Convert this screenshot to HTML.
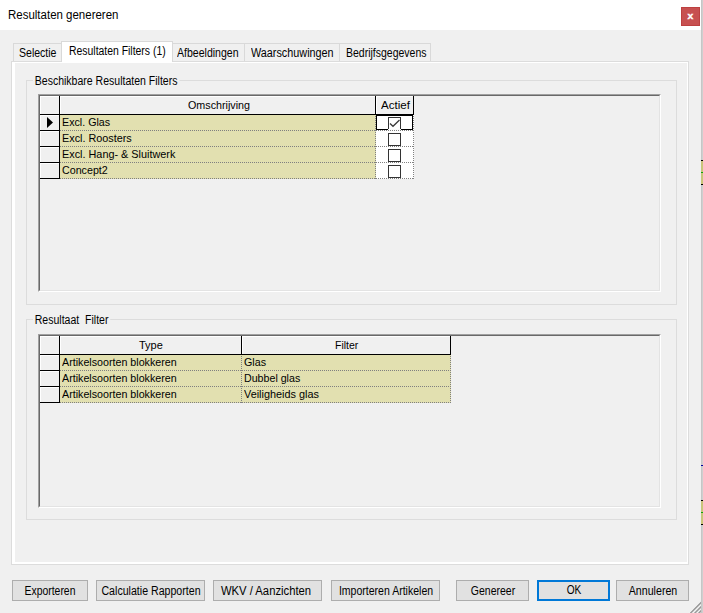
<!DOCTYPE html>
<html lang="nl">
<head>
<meta charset="utf-8">
<title>Resultaten genereren</title>
<style>
*{box-sizing:border-box;margin:0;padding:0}
html,body{width:703px;height:613px;overflow:hidden;background:#f0f0f0}
body{position:relative;font-family:"Liberation Sans",sans-serif;font-size:11px;color:#000;line-height:13px}
.abs{position:absolute}
.t{position:absolute;white-space:pre;display:inline-block;transform-origin:0 0}
#titlebar{left:0;top:0;width:701px;height:30px;background:#fff}
#title{font-size:12px;line-height:14px}
#close{left:681px;top:7px;width:19px;height:19px;background:#c75050;border:1px solid #bd4040}
#close span{position:absolute;left:-1px;top:3px;width:19px;text-align:center;color:#fff;font-weight:bold;font-size:9px;line-height:11px;transform:scaleX(1.15);-webkit-text-stroke:0.35px #fff}
#rstrip{left:701px;top:0;width:2px;height:613px;background:linear-gradient(to right,#c6c6c6 50%,#cfcfcf 50%)}
.patch{left:701px;width:2px;height:25px;background:#c9c57a;border-top:1px solid #000;border-bottom:1px solid #000}
.patch i{position:absolute;left:0;top:11px;width:2px;height:1px;background:#10a010}
/* tabs */
.tab{border:1px solid #d9d9d9;border-bottom:none;background:#f0f0f0;top:43px;height:18px}
.tab.sel{top:41px;height:21px;background:#fff}
#pane{left:11px;top:61px;width:678px;height:504px;border:1px solid #dcdcdc;background:#fff}
#page{left:15px;top:63px;width:672px;height:499px;background:#f0f0f0}
/* group */
.grp{border:1px solid #dcdcdc}
.glbl{background:#f0f0f0;padding:0 2px}
/* grid */
.grid{border-style:solid;border-width:1px;border-color:#a0a0a0 #fff #fff #a0a0a0;background:#f0f0f0}
.grid .in{position:absolute;left:0;top:0;right:0;bottom:0;border-style:solid;border-width:1px;border-color:#696969 #e3e3e3 #e3e3e3 #696969}
.hc{background:#f0f0f0;border-left:1px solid #fff;border-top:1px solid #fff}
.bl{background:#000}
.cell{background:#e2e0b0}
.wcell{background:#fff}
.hd{background-image:linear-gradient(to right,#808080 50%,rgba(0,0,0,0) 50%);background-size:2px 1px;height:1px}
.vd{background-image:linear-gradient(to bottom,rgba(0,0,0,0) 50%,#808080 50%);background-size:1px 2px;width:1px}
.chk{width:13px;height:13px;border:1px solid #333;background:#fff}
/* buttons */
.btn{top:580px;height:21px;border:1px solid #adadad;background:#e1e1e1;text-align:center;line-height:19px;white-space:pre}
.bt{position:absolute;left:50%;top:1px;white-space:pre;transform-origin:50% 50%;font-size:12px}
#tb1,#tb2,#tb3,#tb4,#tb5,#g1,#g2{font-size:12px}
.btn.def{border:2px solid #0078d7;line-height:17px}
.btn.def .bt{top:0}
</style>
</head>
<body>
<div class="abs" id="titlebar"></div>
<span class="t" id="title" style="left:8.4px;top:8px;transform:scaleX(0.957)">Resultaten genereren</span>
<div class="abs" id="close"><span>x</span></div>
<div class="abs" id="rstrip"></div>
<div class="abs patch" style="top:160px"><i></i></div>
<div class="abs patch" style="top:500px"><i></i></div>
<div class="abs" style="left:701px;top:465px;width:2px;height:1px;background:#0000a0"></div>

<!-- tab pane -->
<div class="abs" id="pane"></div>
<div class="abs" id="page"></div>

<!-- tabs -->
<div class="abs tab" style="left:13px;width:49px"></div>
<div class="abs tab" style="left:172px;width:73px"></div>
<div class="abs tab" style="left:244px;width:96px"></div>
<div class="abs tab" style="left:339px;width:92px"></div>
<div class="abs tab sel" style="left:61px;width:112px"></div>
<span class="t" id="tb1" style="left:18.9px;top:47px;transform:scaleX(0.878)">Selectie</span>
<span class="t" id="tb2" style="left:68.5px;top:45px;transform:scaleX(0.868)">Resultaten Filters (1)</span>
<span class="t" id="tb3" style="left:177px;top:47px;transform:scaleX(0.879)">Afbeeldingen</span>
<span class="t" id="tb4" style="left:251px;top:47px;transform:scaleX(0.902)">Waarschuwingen</span>
<span class="t" id="tb5" style="left:346.3px;top:47px;transform:scaleX(0.874)">Bedrijfsgegevens</span>

<!-- group 1 -->
<div class="abs grp" style="left:26px;top:80px;width:651px;height:225px"></div>
<span class="t glbl" id="g1" style="left:33px;top:75px;transform:scaleX(0.877)">Beschikbare Resultaten Filters</span>
<!-- group 2 -->
<div class="abs grp" style="left:26px;top:319px;width:651px;height:201px"></div>
<span class="t glbl" id="g2" style="left:33px;top:314px;transform:scaleX(0.877)">Resultaat  Filter</span>

<!-- grid 1 -->
<div class="abs grid" style="left:38px;top:94px;width:623px;height:198px"><div class="in"></div></div>
<!-- grid 2 -->
<div class="abs grid" style="left:38px;top:334px;width:623px;height:174px"><div class="in"></div></div>

<!-- gridcontent -->
<div class="abs hc" style="left:40px;top:96px;width:19px;height:18px"></div>
<div class="abs bl" style="left:59px;top:96px;width:1px;height:19px"></div>
<div class="abs hc" style="left:60px;top:96px;width:315px;height:18px"></div>
<div class="abs bl" style="left:375px;top:96px;width:1px;height:19px"></div>
<div class="abs hc" style="left:376px;top:96px;width:37px;height:18px"></div>
<div class="abs bl" style="left:413px;top:96px;width:1px;height:19px"></div>
<div class="abs bl" style="left:40px;top:114px;width:374px;height:1px"></div>
<div class="abs hc" style="left:40px;top:115px;width:19px;height:15px"></div>
<div class="abs bl" style="left:59px;top:115px;width:1px;height:16px"></div>
<div class="abs bl" style="left:40px;top:130px;width:20px;height:1px"></div>
<div class="abs cell" style="left:60px;top:115px;width:315px;height:15px"></div>
<div class="abs cell" style="left:60px;top:130px;width:316px;height:1px"></div>
<div class="abs cell" style="left:375px;top:115px;width:1px;height:15px"></div>
<div class="abs wcell" style="left:376px;top:115px;width:37px;height:15px"></div>
<div class="abs wcell" style="left:376px;top:130px;width:38px;height:1px"></div>
<div class="abs wcell" style="left:413px;top:115px;width:1px;height:15px"></div>
<div class="abs hd" style="left:60px;top:130px;width:354px"></div>
<div class="abs hc" style="left:40px;top:131px;width:19px;height:15px"></div>
<div class="abs bl" style="left:59px;top:131px;width:1px;height:16px"></div>
<div class="abs bl" style="left:40px;top:146px;width:20px;height:1px"></div>
<div class="abs cell" style="left:60px;top:131px;width:315px;height:15px"></div>
<div class="abs cell" style="left:60px;top:146px;width:316px;height:1px"></div>
<div class="abs cell" style="left:375px;top:131px;width:1px;height:15px"></div>
<div class="abs wcell" style="left:376px;top:131px;width:37px;height:15px"></div>
<div class="abs wcell" style="left:376px;top:146px;width:38px;height:1px"></div>
<div class="abs wcell" style="left:413px;top:131px;width:1px;height:15px"></div>
<div class="abs hd" style="left:60px;top:146px;width:354px"></div>
<div class="abs hc" style="left:40px;top:147px;width:19px;height:15px"></div>
<div class="abs bl" style="left:59px;top:147px;width:1px;height:16px"></div>
<div class="abs bl" style="left:40px;top:162px;width:20px;height:1px"></div>
<div class="abs cell" style="left:60px;top:147px;width:315px;height:15px"></div>
<div class="abs cell" style="left:60px;top:162px;width:316px;height:1px"></div>
<div class="abs cell" style="left:375px;top:147px;width:1px;height:15px"></div>
<div class="abs wcell" style="left:376px;top:147px;width:37px;height:15px"></div>
<div class="abs wcell" style="left:376px;top:162px;width:38px;height:1px"></div>
<div class="abs wcell" style="left:413px;top:147px;width:1px;height:15px"></div>
<div class="abs hd" style="left:60px;top:162px;width:354px"></div>
<div class="abs hc" style="left:40px;top:163px;width:19px;height:15px"></div>
<div class="abs bl" style="left:59px;top:163px;width:1px;height:16px"></div>
<div class="abs bl" style="left:40px;top:178px;width:20px;height:1px"></div>
<div class="abs cell" style="left:60px;top:163px;width:315px;height:15px"></div>
<div class="abs cell" style="left:60px;top:178px;width:316px;height:1px"></div>
<div class="abs cell" style="left:375px;top:163px;width:1px;height:15px"></div>
<div class="abs wcell" style="left:376px;top:163px;width:37px;height:15px"></div>
<div class="abs wcell" style="left:376px;top:178px;width:38px;height:1px"></div>
<div class="abs wcell" style="left:413px;top:163px;width:1px;height:15px"></div>
<div class="abs hd" style="left:60px;top:178px;width:354px"></div>
<div class="abs vd" style="left:375px;top:115px;height:64px"></div>
<div class="abs vd" style="left:413px;top:115px;height:64px"></div>
<span class="t" id="h1a" style="left:187.5px;top:99px;transform:scaleX(0.976)">Omschrijving</span>
<span class="t" id="h1b" style="left:381px;top:99px;transform:scaleX(1.05)">Actief</span>
<span class="t" id="r1_0" style="left:62px;top:116px;transform:scaleX(0.972)">Excl. Glas</span>
<div class="abs chk" style="left:388px;top:117px;height:12px;border-bottom:none"></div>
<span class="t" id="r1_1" style="left:62px;top:132px;transform:scaleX(0.984)">Excl. Roosters</span>
<div class="abs chk" style="left:388px;top:133px"></div>
<span class="t" id="r1_2" style="left:62px;top:148px;transform:scaleX(0.986)">Excl. Hang- &amp; Sluitwerk</span>
<div class="abs chk" style="left:388px;top:149px"></div>
<span class="t" id="r1_3" style="left:62px;top:164px;transform:scaleX(0.972)">Concept2</span>
<div class="abs chk" style="left:388px;top:165px"></div>
<div class="abs" style="left:376px;top:114px;width:37px;height:16px;border:1px solid #000;border-top-width:2px"></div>
<div class="abs" style="left:388px;top:129px;width:13px;height:1px;background:#fbfbfb"></div>
<svg class="abs" style="left:388px;top:117px" width="13" height="13" viewBox="0 0 13 13"><path d="M2 6.5 L5 9.3 L11.5 3" fill="none" stroke="#3a3a3a" stroke-width="1.3"/></svg>
<svg class="abs" style="left:46px;top:116px" width="9" height="13" viewBox="0 0 9 13"><path d="M1 1 L1 12 L7 6.5 Z" fill="#000"/></svg>
<div class="abs hc" style="left:40px;top:336px;width:19px;height:18px"></div>
<div class="abs bl" style="left:59px;top:336px;width:1px;height:19px"></div>
<div class="abs hc" style="left:60px;top:336px;width:181px;height:18px"></div>
<div class="abs bl" style="left:241px;top:336px;width:1px;height:19px"></div>
<div class="abs hc" style="left:242px;top:336px;width:208px;height:18px"></div>
<div class="abs bl" style="left:450px;top:336px;width:1px;height:19px"></div>
<div class="abs bl" style="left:40px;top:354px;width:411px;height:1px"></div>
<div class="abs hc" style="left:40px;top:355px;width:19px;height:15px"></div>
<div class="abs bl" style="left:59px;top:355px;width:1px;height:16px"></div>
<div class="abs bl" style="left:40px;top:370px;width:20px;height:1px"></div>
<div class="abs cell" style="left:60px;top:355px;width:181px;height:15px"></div>
<div class="abs cell" style="left:60px;top:370px;width:182px;height:1px"></div>
<div class="abs cell" style="left:241px;top:355px;width:1px;height:15px"></div>
<div class="abs cell" style="left:242px;top:355px;width:208px;height:15px"></div>
<div class="abs cell" style="left:242px;top:370px;width:209px;height:1px"></div>
<div class="abs cell" style="left:450px;top:355px;width:1px;height:15px"></div>
<div class="abs hd" style="left:60px;top:370px;width:391px"></div>
<div class="abs hc" style="left:40px;top:371px;width:19px;height:15px"></div>
<div class="abs bl" style="left:59px;top:371px;width:1px;height:16px"></div>
<div class="abs bl" style="left:40px;top:386px;width:20px;height:1px"></div>
<div class="abs cell" style="left:60px;top:371px;width:181px;height:15px"></div>
<div class="abs cell" style="left:60px;top:386px;width:182px;height:1px"></div>
<div class="abs cell" style="left:241px;top:371px;width:1px;height:15px"></div>
<div class="abs cell" style="left:242px;top:371px;width:208px;height:15px"></div>
<div class="abs cell" style="left:242px;top:386px;width:209px;height:1px"></div>
<div class="abs cell" style="left:450px;top:371px;width:1px;height:15px"></div>
<div class="abs hd" style="left:60px;top:386px;width:391px"></div>
<div class="abs hc" style="left:40px;top:387px;width:19px;height:15px"></div>
<div class="abs bl" style="left:59px;top:387px;width:1px;height:16px"></div>
<div class="abs bl" style="left:40px;top:402px;width:20px;height:1px"></div>
<div class="abs cell" style="left:60px;top:387px;width:181px;height:15px"></div>
<div class="abs cell" style="left:60px;top:402px;width:182px;height:1px"></div>
<div class="abs cell" style="left:241px;top:387px;width:1px;height:15px"></div>
<div class="abs cell" style="left:242px;top:387px;width:208px;height:15px"></div>
<div class="abs cell" style="left:242px;top:402px;width:209px;height:1px"></div>
<div class="abs cell" style="left:450px;top:387px;width:1px;height:15px"></div>
<div class="abs hd" style="left:60px;top:402px;width:391px"></div>
<div class="abs vd" style="left:241px;top:355px;height:48px"></div>
<div class="abs vd" style="left:450px;top:355px;height:48px"></div>
<span class="t" id="h2a" style="left:139px;top:339px">Type</span>
<span class="t" id="h2b" style="left:334.6px;top:339px;transform:scaleX(0.952)">Filter</span>
<span class="t" id="r2a_0" style="left:62px;top:356px;transform:scaleX(0.972)">Artikelsoorten blokkeren</span>
<span class="t" id="r2b_0" style="left:244px;top:356px;transform:scaleX(0.975)">Glas</span>
<span class="t" id="r2a_1" style="left:62px;top:372px;transform:scaleX(0.972)">Artikelsoorten blokkeren</span>
<span class="t" id="r2b_1" style="left:244px;top:372px;transform:scaleX(0.968)">Dubbel glas</span>
<span class="t" id="r2a_2" style="left:62px;top:388px;transform:scaleX(0.972)">Artikelsoorten blokkeren</span>
<span class="t" id="r2b_2" style="left:244px;top:388px;transform:scaleX(0.988)">Veiligheids glas</span>
<!-- /gridcontent -->
<!-- buttons -->
<div class="abs btn" style="left:12px;width:76px"><span class="bt" id="b1" style="transform:translateX(-50%) scaleX(0.867)">Exporteren</span></div>
<div class="abs btn" style="left:96px;width:109px"><span class="bt" id="b2" style="transform:translateX(-50%) scaleX(0.884);margin-left:0.8px">Calculatie Rapporten</span></div>
<div class="abs btn" style="left:213px;width:109px"><span class="bt" id="b3" style="transform:translateX(-50%) scaleX(0.939);margin-left:-1.4px">WKV / Aanzichten</span></div>
<div class="abs btn" style="left:331px;width:109px"><span class="bt" id="b4" style="transform:translateX(-50%) scaleX(0.877)">Importeren Artikelen</span></div>
<div class="abs btn" style="left:456px;width:73px"><span class="bt" id="b5" style="transform:translateX(-50%) scaleX(0.873)">Genereer</span></div>
<div class="abs btn def" style="left:537px;width:73px"><span class="bt" id="b6" style="transform:translateX(-50%) scaleX(0.843)">OK</span></div>
<div class="abs btn" style="left:616px;width:73px"><span class="bt" id="b7" style="transform:translateX(-50%) scaleX(0.887);margin-left:0.5px">Annuleren</span></div>

<!-- grip -->
<svg class="abs" style="left:688px;top:600px" width="13" height="13" viewBox="0 0 13 13">
<g stroke-linecap="butt" fill="none">
<path d="M0.9 13.5 L13.5 0.9 M5.2 13.5 L13.5 5.2 M9.2 13.5 L13.5 9.2" stroke="#fff" stroke-width="1"/>
<path d="M2.1 13.5 L13.5 2.1 M6.4 13.5 L13.5 6.4 M10.4 13.5 L13.5 10.4" stroke="#9a9a9a" stroke-width="1.5"/>
</g></svg>
</body>
</html>
